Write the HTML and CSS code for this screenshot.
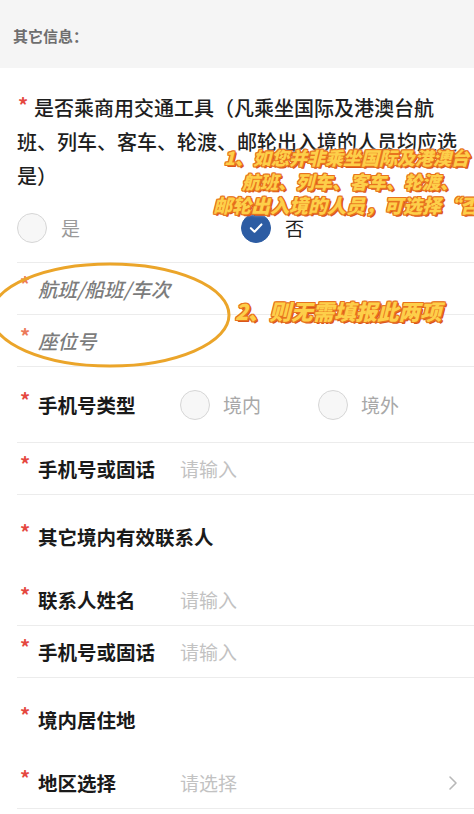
FILE: index.html
```html
<!DOCTYPE html>
<html lang="zh-CN">
<head>
<meta charset="utf-8">
<title>其它信息</title>
<link rel="stylesheet" href="styles.css">
</head>
<body>
<div class="page">
  <div class="section-title">其它信息：</div>

  <div class="question"><span class="star q-star">*</span>是否乘商用交通工具（凡乘坐国际及港澳台航<br>班、列车、客车、轮渡、邮轮出入境的人员均应选<br>是）</div>

  <div class="choice-row">
    <div class="option wide"><span class="radio"></span><span class="opt-text muted">是</span></div>
    <div class="option wide"><span class="radio checked"><svg viewBox="0 0 30 30" width="30" height="30"><path d="M9.5 15.2 L13.4 19 L20.8 11.2" fill="none" stroke="#fff" stroke-width="2.2" stroke-linecap="round" stroke-linejoin="round"/></svg></span><span class="opt-text">否</span></div>
  </div>

  <div class="row">
    <div class="label-col"><span class="star faded-star">*</span><span class="label faded">航班/船班/车次</span></div>
  </div>
  <div class="row">
    <div class="label-col"><span class="star faded-star">*</span><span class="label faded">座位号</span></div>
  </div>

  <div class="row tall">
    <div class="label-col"><span class="star">*</span><span class="label">手机号类型</span></div>
    <div class="option narrow"><span class="radio"></span><span class="opt-text light">境内</span></div>
    <div class="option narrow"><span class="radio"></span><span class="opt-text light">境外</span></div>
  </div>
  <div class="row">
    <div class="label-col"><span class="star">*</span><span class="label">手机号或固话</span></div>
    <span class="placeholder">请输入</span>
  </div>

  <div class="row group">
    <div class="label-col wide-label"><span class="star">*</span><span class="label">其它境内有效联系人</span></div>
  </div>
  <div class="row">
    <div class="label-col"><span class="star">*</span><span class="label">联系人姓名</span></div>
    <span class="placeholder">请输入</span>
  </div>
  <div class="row">
    <div class="label-col"><span class="star">*</span><span class="label">手机号或固话</span></div>
    <span class="placeholder">请输入</span>
  </div>

  <div class="row group">
    <div class="label-col wide-label"><span class="star">*</span><span class="label">境内居住地</span></div>
  </div>
  <div class="row">
    <div class="label-col"><span class="star">*</span><span class="label">地区选择</span></div>
    <span class="placeholder">请选择</span>
    <svg class="chevron" viewBox="0 0 10 16" width="10" height="16"><path d="M2 2 L8 8 L2 14" fill="none" stroke="#b8b8b8" stroke-width="1.6" stroke-linecap="round" stroke-linejoin="round"/></svg>
  </div>

  <svg class="ellipse" viewBox="0 0 240 116" width="240" height="116"><ellipse cx="110" cy="57" rx="119" ry="51" fill="none" stroke="#eba52a" stroke-width="3"/></svg>

  <div class="note note-one">
    <div class="note-line l1">1、如您并非乘坐国际及港澳台</div>
    <div class="note-line l2">航班、列车、客车、轮渡、</div>
    <div class="note-line l3">邮轮出入境的人员，可选择“否”</div>
  </div>
  <div class="note note-two">2、则无需填报此两项</div>
</div>
</body>
</html>
```
FILE: styles.css
```css
html, body {
  margin: 0;
  padding: 0;
  background: #ffffff;
}
body {
  font-family: "Noto Sans CJK SC", "Noto Sans", sans-serif;
  color: #1c1c1c;
  overflow: hidden;
}
.page {
  position: relative;
  width: 474px;
  height: 814px;
  overflow: hidden;
}
.section-title {
  height: 68px;
  background: #f5f5f5;
  display: flex;
  align-items: center;
  padding-left: 13px;
  padding-top: 2px;
  box-sizing: border-box;
  font-size: 15px;
  font-weight: 700;
  color: #6e6e6e;
}
.question {
  padding: 23px 0 0 17px;
  font-size: 20px;
  line-height: 34px;
  font-weight: 500;
  color: #1e1e1e;
  white-space: nowrap;
}
.star {
  display: inline-block;
  width: 21px;
  padding-left: 3px;
  box-sizing: border-box;
  color: #e5483f;
  font-size: 20px;
  font-weight: 700;
  transform: translateY(-5px);
}
.q-star {
  width: 17px;
  padding-left: 1px;
  transform: translateY(-3px);
}
.faded-star {
  color: #ec7a5a;
}
.choice-row {
  display: flex;
  align-items: center;
  height: 69px;
  margin-left: 17px;
  border-bottom: 1px solid #ececec;
}
.option {
  display: flex;
  align-items: center;
}
.option.wide {
  width: 224px;
  gap: 14px;
}
.option.narrow {
  width: 138px;
  gap: 13px;
}
.radio {
  width: 30px;
  height: 30px;
  box-sizing: border-box;
  border: 1px solid #d6d6d6;
  background: #f7f7f7;
  border-radius: 50%;
  flex-shrink: 0;
  display: flex;
  align-items: center;
  justify-content: center;
}
.radio.checked {
  background: #2c5ca3;
  border-color: #2c5ca3;
}
.radio svg {
  display: block;
}
.opt-text {
  font-size: 19px;
  color: #222;
}
.opt-text.muted {
  color: #9a9a9a;
}
.opt-text.light {
  color: #a8a8a8;
}
.row {
  display: flex;
  align-items: center;
  height: 51px;
  margin-left: 17px;
  border-bottom: 1px solid #ececec;
  box-sizing: content-box;
}
.row.tall {
  height: 75px;
}
.row.group {
  height: 76px;
  padding-top: 3px;
  border-bottom: none;
}
.label-col {
  width: 163px;
  flex-shrink: 0;
  display: flex;
  align-items: center;
  white-space: nowrap;
}
.label-col.wide-label {
  width: auto;
}
.label {
  font-size: 19.5px;
  font-weight: 700;
  color: #1a1a1a;
}
.label.faded {
  font-weight: 500;
  font-style: italic;
  color: #7c7c7c;
}
.placeholder {
  font-size: 19px;
  color: #c2c2c2;
}
.chevron {
  margin-left: auto;
  margin-right: 16px;
}
.ellipse {
  position: absolute;
  left: 0;
  top: 258px;
}
.note {
  position: absolute;
  font-weight: 900;
  font-style: italic;
  white-space: nowrap;
  color: #fdcf4a;
  text-shadow:
    1px 0 0 #e8741e, -1px 0 0 #e8741e, 0 1px 0 #e8741e, 0 -1px 0 #e8741e,
    1px 1px 0 #e8741e, -1px -1px 0 #e8741e, 1px -1px 0 #e8741e, -1px 1px 0 #e8741e,
    2px 2px 0 #d9561c, 2px 1px 0 #d9561c,
    0 0 4px #ffffff, 0 0 3px #ffffff;
}
.note-one {
  left: 0;
  top: 145px;
  font-size: 18px;
  line-height: 24px;
}
.note-line.l1 { padding-left: 224px; }
.note-line.l2 { padding-left: 242px; }
.note-line.l3 { padding-left: 213px; font-size: 19px; }
.note-two {
  left: 235px;
  top: 296px;
  font-size: 21.5px;
  line-height: 30px;
}
```
